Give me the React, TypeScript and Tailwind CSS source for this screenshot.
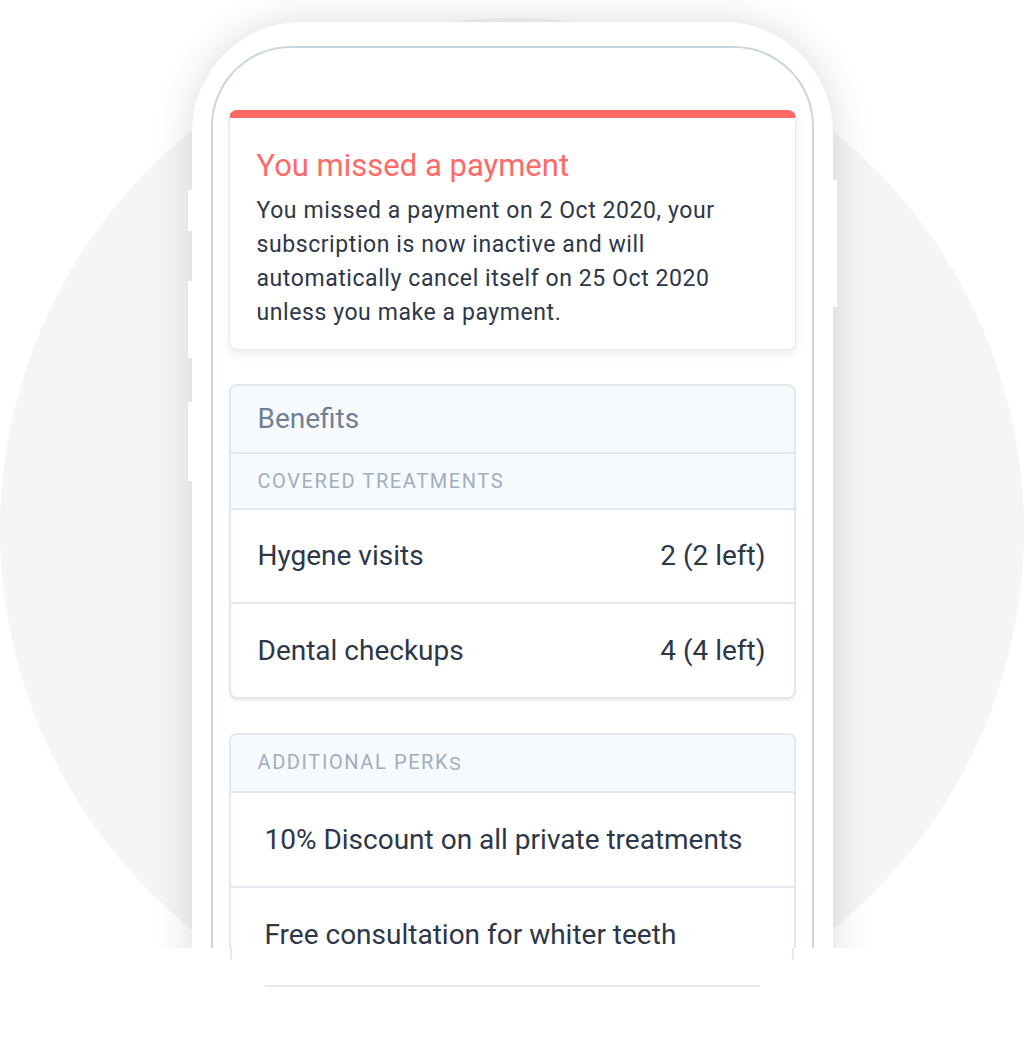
export default function App() {
  const benefits = [
    { name: "Hygene visits", value: "2 (2 left)" },
    { name: "Dental checkups", value: "4 (4 left)" },
  ]
  const perks = ["10% Discount on all private treatments", "Free consultation for whiter teeth"]

  return (
    <div className="w-[1024px] h-[1046px] bg-white font-['Roboto',sans-serif] flex flex-col">
      <div className="relative h-[948px] overflow-hidden">
        {/* backdrop circle */}
        <div className="absolute left-0 top-[18px] w-[1024px] h-[1024px] rounded-full bg-[#f4f5f7]" />

        {/* phone body */}
        <div className="relative mx-auto mt-[22px] w-[641px] h-[1000px] bg-white rounded-t-[110px] px-[19px] pt-[24px] shadow-[0_0_40px_rgba(0,0,0,0.14)]">
          <div className="absolute -left-[4px] top-[168px] w-[4px] h-[41px] bg-white" />
          <div className="absolute -left-[4px] top-[259px] w-[4px] h-[77px] bg-white" />
          <div className="absolute -left-[4px] top-[380px] w-[4px] h-[79px] bg-white" />
          <div className="absolute -right-[4px] top-[158px] w-[4px] h-[127px] bg-white" />

          {/* screen */}
          <div className="h-full border-2 border-b-0 border-[#cbd5e0] rounded-t-[80px] px-[16px] pt-[62px] flex flex-col">
            {/* alert card */}
            <div className="bg-white border border-[#e2e8f0] border-t-[8px] border-t-[#fe6a66] rounded-[8px] pl-[27px] pr-6 pt-[30px] pb-[19px] shadow-[0_4px_10px_rgba(0,0,0,0.08)]">
              <h2 className="text-[31px] leading-[36px] text-[#fe6a66]">You missed a payment</h2>
              <p className="mt-[10px] max-w-[495px] text-[23px] leading-[34px] tracking-[0.025em] text-[#2d3748]">
                You missed a payment on 2 Oct 2020, your subscription is now inactive and will automatically cancel itself on 25 Oct 2020 unless you make a payment.
              </p>
            </div>

            {/* benefits */}
            <div className="mt-[34px] bg-white border-2 border-[#e2e8f0] rounded-[8px] overflow-hidden shadow-[0_2px_2px_rgba(0,0,0,0.06)]">
              <div className="h-[68px] flex items-center pl-[27px] bg-[#f7fafc] border-b-2 border-[#e2e8f0] text-[28px] text-[#718096]">
                Benefits
              </div>
              <div className="h-[56px] flex items-center pl-[27px] bg-[#f7fafc] border-b-2 border-[#e2e8f0] text-[20px] tracking-[0.08em] text-[#a0aec0]">
                COVERED TREATMENTS
              </div>
              {benefits.map((b, i) => (
                <div
                  key={b.name}
                  className={`flex items-center justify-between pl-[27px] pr-[28px] text-[28px] text-[#2d3748] ${i < benefits.length - 1 ? "h-[94px] border-b-2 border-[#e2e8f0]" : "h-[93px]"}`}
                >
                  <span>{b.name}</span>
                  <span>{b.value}</span>
                </div>
              ))}
            </div>

            {/* perks */}
            <div className="mt-[34px] bg-white border-2 border-b-0 border-[#e2e8f0] rounded-t-[8px] overflow-hidden">
              <div className="h-[58px] flex items-center pl-[27px] bg-[#f7fafc] border-b-2 border-[#e2e8f0] text-[20px] tracking-[0.08em] text-[#a0aec0]">
                <span>
                  ADDITIONAL PERK<span className="align-text-top text-[19px]">S</span>
                </span>
              </div>
              {perks.map((p) => (
                <div key={p} className="h-[95px] flex items-center pl-[34px] border-b-2 border-[#e2e8f0] text-[28px] leading-[22px] text-[#2d3748]">
                  {p}
                </div>
              ))}
            </div>
          </div>
        </div>
      </div>

      <div className="mx-auto w-[564px] h-[12px] border-x-2 border-[#e2e8f0] bg-white" />
      <div className="mx-auto mt-[25px] w-[495px] h-[2px] rounded-full bg-[#e6e9ee]" />
    </div>
  )
}
